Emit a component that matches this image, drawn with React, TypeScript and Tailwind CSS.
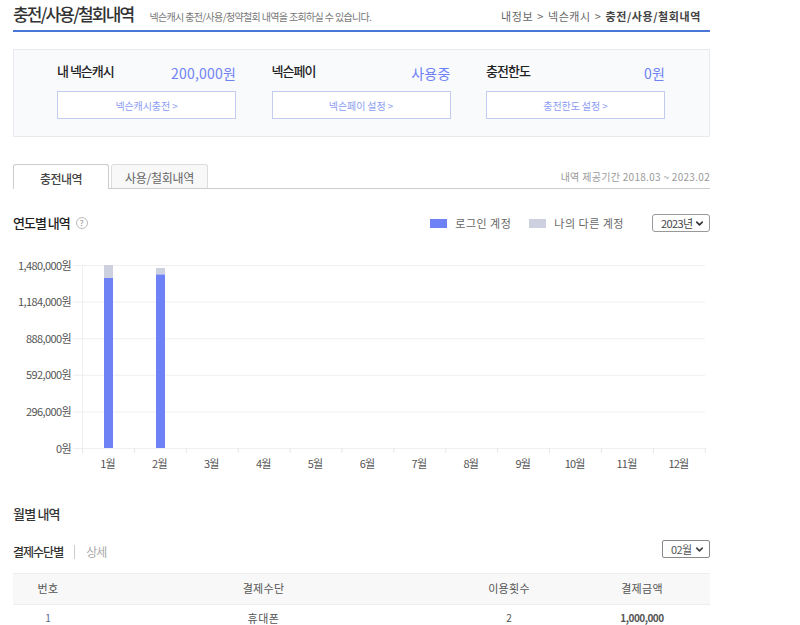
import { ChevronDown } from "lucide-react";

const fontStack = { fontFamily: '"Noto Sans CJK KR", "Liberation Sans", sans-serif' };

const summaryItems = [
  { label: "내 넥슨캐시", value: "200,000원", action: "넥슨캐시충전 >" },
  { label: "넥슨페이", value: "사용중", action: "넥슨페이 설정 >" },
  { label: "충전한도", value: "0원", action: "충전한도 설정 >" },
];

const yLabels = ["1,480,000원", "1,184,000원", "888,000원", "592,000원", "296,000원", "0원"];
const months = ["1월", "2월", "3월", "4월", "5월", "6월", "7월", "8월", "9월", "10월", "11월", "12월"];

function Chart() {
  return (
    <svg width="710" height="220" viewBox="0 0 710 220" className="block">
      {yLabels.map((label, i) => {
        const y = 10.5 + i * 36.6;
        return (
          <g key={label}>
            <line x1="73" x2="705" y1={y} y2={y} stroke="#f0f0f0" />
            <text x="71" y={y + 4} textAnchor="end" fontSize="11" fill="#555555" letterSpacing="-0.6">
              {label}
            </text>
          </g>
        );
      })}
      <line x1="82.5" x2="82.5" y1="10" y2="193" stroke="#f0f0f0" />
      {months.map((month, i) => (
        <g key={month}>
          <line x1={82.5 + (i + 1) * 51.9} x2={82.5 + (i + 1) * 51.9} y1="193" y2="198" stroke="#e6e6e6" />
          <text x={107.5 + i * 51.9} y="213" textAnchor="middle" fontSize="11" fill="#555555" letterSpacing="-0.8">
            {month}
          </text>
        </g>
      ))}
      <line x1="82.5" x2="82.5" y1="193" y2="198" stroke="#e6e6e6" />
      <rect x="104" y="10" width="9" height="13" fill="#ccd0df" />
      <rect x="104" y="23" width="9" height="170" fill="#6f82f5" />
      <rect x="156" y="13" width="9" height="6.5" fill="#ccd0df" />
      <rect x="156" y="19.5" width="9" height="173.5" fill="#6f82f5" />
    </svg>
  );
}

export default function App() {
  return (
    <div className="h-[625px] w-[800px] overflow-hidden bg-white" style={fontStack}>
      <div className="ml-[13px] w-[697px]">
        {/* title */}
        <div className="flex h-[32px] items-center justify-between border-b-2 border-[#4a76d8] pb-[2px]">
          <div className="flex items-center">
            <h1 className="text-[17px] font-medium tracking-[-1.8px] text-[#333333]">충전/사용/철회내역</h1>
            <p className="ml-[16px] mt-[4px] text-[10px] tracking-[-0.65px] text-[#777777]">
              넥슨캐시 충전/사용/청약철회 내역을 조회하실 수 있습니다.
            </p>
          </div>
          <div className="mr-[9px] mt-[4px] flex items-center text-[11px] tracking-[0.6px] text-[#666666]">
            <span>내정보</span>
            <span className="mx-[4px]">&gt;</span>
            <span>넥슨캐시</span>
            <span className="mx-[4px]">&gt;</span>
            <span className="font-bold text-[#444444]">충전/사용/철회내역</span>
          </div>
        </div>

        {/* summary */}
        <div className="mt-[17px] flex h-[88px] gap-[35.5px] border border-[#e8eaee] bg-[#f9fafc] pl-[43px] pt-[11px]">
          {summaryItems.map((item) => (
            <div key={item.label} className="w-[179px]">
              <div className="flex h-[20px] items-center justify-between">
                <span className="text-[13px] font-medium tracking-[-1px] text-[#222222]">{item.label}</span>
                <span className="mt-[4px] text-[14px] tracking-[0.2px] text-[#6f82f5]">{item.value}</span>
              </div>
              <button className="mt-[10px] flex h-[28px] w-[179px] items-center justify-center border border-[#c3cbf0] bg-white text-[10px] tracking-[-0.1px] text-[#8c9cf2]">
                {item.action}
              </button>
            </div>
          ))}
        </div>

        {/* tabs */}
        <div className="mt-[27px] flex h-[25px] items-end border-b border-[#cccccc]">
          <div className="relative top-px flex h-[25px] w-[96px] items-center justify-center rounded-t-[3px] border border-b-0 border-[#cccccc] bg-white pt-[4px] text-[12px] font-medium tracking-[-0.6px] text-[#444444]">
            충전내역
          </div>
          <div className="ml-[2px] flex h-[24px] w-[97px] items-center justify-center rounded-t-[3px] border border-b-0 border-[#dddddd] bg-[#f8f8f8] pt-[2px] text-[12px] tracking-[-0.3px] text-[#666666]">
            사용/철회내역
          </div>
          <div className="mb-[4px] ml-auto text-[10px] tracking-[0.3px] text-[#999999]">내역 제공기간 2018.03 ~ 2023.02</div>
        </div>

        {/* yearly */}
        <div className="mt-[24px] flex h-[20px] items-center">
          <h2 className="text-[13px] font-medium tracking-[-1px] text-[#222222]">연도별 내역</h2>
          <span className="ml-[6px] flex h-[12px] w-[12px] items-center justify-center rounded-full border border-[#bbbbbb] text-[8px] text-[#888888]">
            ?
          </span>
          <div className="ml-auto flex items-center text-[11px] tracking-[0.5px] text-[#666666]">
            <span className="h-[9px] w-[17px] bg-[#6f82f5]" />
            <span className="ml-[8px]">로그인 계정</span>
            <span className="ml-[18px] h-[9px] w-[17px] bg-[#ccd0df]" />
            <span className="ml-[8px]">나의 다른 계정</span>
          </div>
          <div className="relative ml-[28px] h-[18px] w-[58px]">
            <select
              defaultValue="2023년"
              className="block h-[18px] w-[58px] appearance-none rounded-[3px] border border-[#999999] bg-white pl-[8px] text-[11px] leading-[16px] tracking-[-0.6px] text-[#444444]"
            >
              <option>2023년</option>
              <option>2022년</option>
            </select>
            <ChevronDown size={11} strokeWidth={3.5} className="pointer-events-none absolute right-[5px] top-[4px] text-[#333333]" />
          </div>
        </div>
      </div>

      <div className="mt-[22px]">
        <Chart />
      </div>

      <div className="ml-[13px] w-[697px]">
        {/* monthly */}
        <h2 className="mt-[29px] text-[13px] font-medium tracking-[-0.8px] text-[#333333]">월별 내역</h2>
        <div className="mt-[16px] flex h-[18px] items-center">
          <div className="mt-[6px] flex items-center">
            <span className="text-[12px] font-medium tracking-[-1px] text-[#333333]">결제수단별</span>
            <span className="mx-[11px] h-[14px] w-px bg-[#cccccc]" />
            <span className="text-[12px] tracking-[-1px] text-[#aaaaaa]">상세</span>
          </div>
          <div className="relative ml-auto h-[18px] w-[48px]">
            <select
              defaultValue="02월"
              className="block h-[18px] w-[48px] appearance-none rounded-[2px] border border-[#888888] bg-white pl-[8px] text-[11px] leading-[16px] tracking-[-0.6px] text-[#555555]"
            >
              <option>01월</option>
              <option>02월</option>
            </select>
            <ChevronDown size={11} strokeWidth={3.5} className="pointer-events-none absolute right-[5px] top-[4px] text-[#444444]" />
          </div>
        </div>

        <table className="mt-[15px] w-full table-fixed text-[11px] text-[#555555]">
          <colgroup>
            <col className="w-[70px]" />
            <col className="w-[361px]" />
            <col className="w-[130px]" />
            <col />
          </colgroup>
          <thead>
            <tr className="h-[31px] border-y border-[#eeeeee] bg-[#f8f8f8]">
              <th className="font-normal tracking-[0.3px]">번호</th>
              <th className="font-normal tracking-[0.3px]">결제수단</th>
              <th className="font-normal tracking-[0.3px]">이용횟수</th>
              <th className="font-normal tracking-[0.3px]">결제금액</th>
            </tr>
          </thead>
          <tbody>
            <tr className="h-[28px] text-center leading-[14px]">
              <td className="text-[10px] text-[#5a6a90]">1</td>
              <td className="tracking-[0.5px]">휴대폰</td>
              <td className="text-[10px]">2</td>
              <td className="text-[10px] font-bold tracking-[-0.5px]">1,000,000</td>
            </tr>
          </tbody>
        </table>
      </div>
    </div>
  );
}
